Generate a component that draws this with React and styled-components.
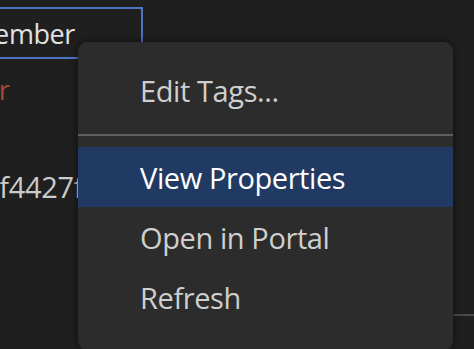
import React from "react";
import styled, { createGlobalStyle } from "styled-components";

const Global = createGlobalStyle`
  html, body { margin: 0; padding: 0; background: #1f1f1f; }
  body { width: 474px; height: 349px; overflow: hidden; font-family: "Open Sans", "Noto Sans", sans-serif; }
  #root { width: 474px; height: 349px; }
`;

const Stage = styled.div`
  position: relative;
  width: 474px;
  height: 349px;
  overflow: hidden;
  background: #1f1f1f;
`;

const Panel = styled.div`
  display: flex;
  flex-direction: column;
  padding-top: 7px;
`;

const InputBox = styled.div`
  width: 163px;
  height: 52px;
  box-sizing: border-box;
  margin-left: -20px;
  border: 2px solid #4f74c4;
  display: flex;
  align-items: center;
  justify-content: flex-end;
  padding-right: 66px;
  overflow: hidden;
`;

const BoxText = styled.span`
  font-size: 27px;
  color: #e2e2e2;
  letter-spacing: -0.4px;
  white-space: nowrap;
  line-height: 1;
`;

const Row = styled.div`
  height: ${(p) => p.$h}px;
  display: flex;
  align-items: flex-end;
  font-size: ${(p) => p.$size}px;
  line-height: 1;
  white-space: nowrap;
  color: ${(p) => p.$color};
  margin-left: ${(p) => p.$shift || 0}px;
  letter-spacing: -0.3px;
`;

const Menu = styled.div`
  position: absolute;
  left: 78px;
  top: 42px;
  width: 375px;
  height: 308px;
  box-sizing: border-box;
  padding-top: 18px;
  background: #2c2c2c;
  border-radius: 9px;
  box-shadow: 0 0 8px rgba(0, 0, 0, 0.55);
  display: flex;
  flex-direction: column;
`;

const Item = styled.div`
  height: 60px;
  display: flex;
  align-items: center;
  padding-left: 62px;
  font-size: 29px;
  letter-spacing: -0.4px;
  color: ${(p) => (p.$active ? "#ffffff" : "#cfcfcf")};
  background: ${(p) => (p.$active ? "#213a63" : "transparent")};
  white-space: nowrap;
`;

const Separator = styled.div`
  height: 2px;
  margin: 14px 0 11px;
  background: #5e5e5e;
`;

const EdgeLine = styled.div`
  position: absolute;
  left: 452px;
  top: 314px;
  width: 22px;
  height: 2px;
  background: #4a4a4a;
`;

export default function App() {
  return (
    <Stage>
      <Global />
      <Panel>
        <InputBox>
          <BoxText>Member</BoxText>
        </InputBox>
        <Row $h={44} $size={27} $color="#a8483a" $shift={-16}>er</Row>
        <Row $h={98} $size={29} $color="#cccccc" $shift={-17}>6f4427f</Row>
      </Panel>
      <EdgeLine />
      <Menu>
        <Item>Edit Tags...</Item>
        <Separator />
        <Item $active>View Properties</Item>
        <Item>Open in Portal</Item>
        <Item>Refresh</Item>
      </Menu>
    </Stage>
  );
}
